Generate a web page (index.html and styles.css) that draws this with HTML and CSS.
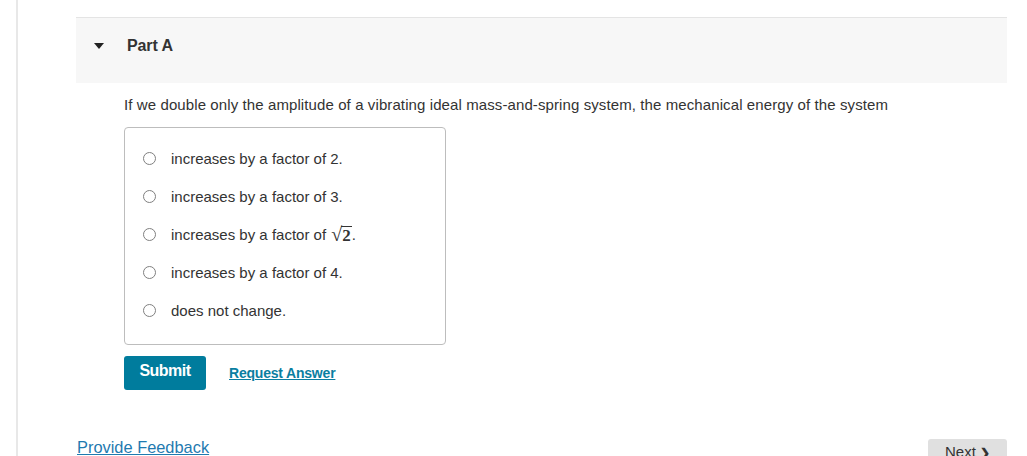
FILE: index.html
```html
<!DOCTYPE html>
<html lang="en">
<head>
    <meta charset="UTF-8">
    <title>Part A</title>
    <link rel="stylesheet" href="styles.css">
</head>
<body>
    <div class="page">
        <div class="content">
            <div class="part-header">
                <span class="caret"></span>
                <h2>Part A</h2>
            </div>

            <div class="part-body">
                <p class="question">If we double only the amplitude of a vibrating ideal mass-and-spring system, the mechanical energy of the system</p>

                <!-- answer choices -->
                <div class="choices">
                    <label class="choice"><span class="radio"></span>increases by a factor of 2.</label>
                    <label class="choice"><span class="radio"></span>increases by a factor of 3.</label>
                    <label class="choice"><span class="radio"></span>increases by a factor of&nbsp;<span class="sqrt"><span class="rad">√</span><span class="radicand">2</span></span>.</label>
                    <label class="choice"><span class="radio"></span>increases by a factor of 4.</label>
                    <label class="choice"><span class="radio"></span>does not change.</label>
                </div>

                <div class="actions">
                    <button class="btn-submit">Submit</button>
                    <a href="#" class="request-link">Request Answer</a>
                </div>
            </div>

            <div class="footer">
                <a href="#" class="feedback-link">Provide Feedback</a>
                <button class="btn-next">Next <span class="chev">❯</span></button>
            </div>
        </div>
    </div>
</body>
</html>
```

FILE: styles.css
```css
body {
    margin: 0;
    font-family: "Liberation Sans", Arial, sans-serif;
    color: #333;
    background: white;
    overflow: hidden;
}

.page {
    margin-left: 16px;
    border-left: 2px solid #e8e8e8;
    height: 456px;
}

.content {
    padding: 17px 20px 0 58px;
}

.part-header {
    display: flex;
    align-items: center;
    height: 66px;
    box-sizing: border-box;
    background: #f7f7f7;
    border-top: 1px solid #e4e4e4;
    padding: 0 0 10px 18px;
}

.caret {
    width: 0;
    height: 0;
    border-left: 5px solid transparent;
    border-right: 5px solid transparent;
    border-top: 6px solid #222;
    margin-right: 23px;
}

.part-header h2 {
    margin: 0;
    font-size: 16px;
    font-weight: bold;
    color: #333;
    letter-spacing: -0.1px;
}

.part-body {
    padding-left: 48px;
}

.question {
    margin: 13px 0 13px;
    font-size: 15px;
    line-height: 18px;
    letter-spacing: 0.1px;
    color: #333;
}

.choices {
    width: 320px;
    border: 1px solid #bdbdbd;
    border-radius: 4px;
    padding: 11px 0 15px 0;
}

.choice {
    display: flex;
    align-items: center;
    height: 38px;
    padding-left: 19px;
    font-size: 15px;
    color: #333;
}

.radio {
    width: 11px;
    height: 11px;
    border: 1.5px solid #808080;
    border-radius: 50%;
    margin-left: -1px;
    margin-right: 15px;
}

.sqrt {
    font-family: "Liberation Serif", "Times New Roman", serif;
    display: inline-flex;
    align-items: flex-end;
    margin-left: 1px;
}

.rad {
    font-size: 20px;
    line-height: 20px;
    margin-right: -1px;
}

.radicand {
    border-top: 1.5px solid #333;
    font-size: 17px;
    font-weight: bold;
    line-height: 17px;
    padding: 0 1px;
}

.actions {
    display: flex;
    align-items: center;
    gap: 23px;
    margin-top: 11px;
}

.btn-submit {
    background: #007c9d;
    color: white;
    border: none;
    border-radius: 3px;
    width: 82px;
    height: 34px;
    font-family: "Liberation Sans", Arial, sans-serif;
    font-size: 16px;
    font-weight: bold;
    letter-spacing: -0.5px;
    padding: 0 0 4px;
}

.request-link {
    color: #0a7ea1;
    font-size: 14px;
    font-weight: bold;
    letter-spacing: -0.2px;
    text-decoration: underline;
}

.footer {
    display: flex;
    justify-content: space-between;
    align-items: flex-start;
    margin-top: 48px;
}

.feedback-link {
    color: #1f7ab0;
    font-size: 16.4px;
    margin-left: 1px;
    text-decoration: underline;
}

.btn-next {
    background: #e0e0e0;
    border: none;
    border-radius: 3px;
    width: 79px;
    height: 30px;
    margin-top: 1px;
    font-family: "Liberation Sans", Arial, sans-serif;
    font-size: 15px;
    color: #333;
    padding: 0 0 5px;
}

.chev {
    font-size: 12px;
    font-weight: bold;
}
```
